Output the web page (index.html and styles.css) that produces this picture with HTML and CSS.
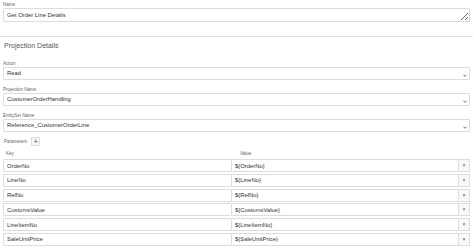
FILE: index.html
```html
<!DOCTYPE html>
<html>
<head>
<meta charset="utf-8">
<link rel="stylesheet" href="styles.css">
</head>
<body>
<div class="page">
  <div class="field name-field">
    <label class="lbl">Name</label>
    <textarea class="ctl area" rows="1">Get Order Line Details</textarea>
  </div>
  <hr class="divider">
  <h2 class="section-title">Projection Details</h2>
  <div class="field">
    <label class="lbl">Action</label>
    <div class="select-wrap"><select class="ctl sel"><option>Read</option></select><span class="chev"><svg viewBox="0 0 10 6" width="4" height="3"><path d="M1 1l4 4 4-4" fill="none" stroke="#444" stroke-width="2"/></svg></span></div>
  </div>
  <div class="field">
    <label class="lbl">Projection Name</label>
    <div class="select-wrap"><select class="ctl sel"><option>CustomerOrderHandling</option></select><span class="chev"><svg viewBox="0 0 10 6" width="4" height="3"><path d="M1 1l4 4 4-4" fill="none" stroke="#444" stroke-width="2"/></svg></span></div>
  </div>
  <div class="field">
    <label class="lbl">EntitySet Name</label>
    <div class="select-wrap"><select class="ctl sel"><option>Reference_CustomerOrderLine</option></select><span class="chev"><svg viewBox="0 0 10 6" width="4" height="3"><path d="M1 1l4 4 4-4" fill="none" stroke="#444" stroke-width="2"/></svg></span></div>
  </div>
  <div class="params-head">
    <span class="lbl">Parameters</span>
    <button class="add">+</button>
  </div>
  <div class="kv-head">
    <span class="lbl key-h">Key</span>
    <span class="lbl val-h">Value</span>
  </div>
  <div class="rows">
    <div class="row"><input class="ctl cell" value="OrderNo"><input class="ctl cell" value="${OrderNo}"><button class="del">×</button></div>
    <div class="row"><input class="ctl cell" value="LineNo"><input class="ctl cell" value="${LineNo}"><button class="del">×</button></div>
    <div class="row"><input class="ctl cell" value="RelNo"><input class="ctl cell" value="${RelNo}"><button class="del">×</button></div>
    <div class="row"><input class="ctl cell" value="CustomsValue"><input class="ctl cell" value="${CustomsValue}"><button class="del">×</button></div>
    <div class="row"><input class="ctl cell" value="LineItemNo"><input class="ctl cell" value="${LineItemNo}"><button class="del">×</button></div>
    <div class="row"><input class="ctl cell" value="SaleUnitPrice"><input class="ctl cell" value="${SaleUnitPrice}"><button class="del">×</button></div>
  </div>
</div>
</body>
</html>
```
FILE: styles.css
```css
* { box-sizing: border-box; }
html, body { margin: 0; padding: 0; background: #fff; }
body { font-family: "Liberation Sans", Arial, sans-serif; color: #333; }
.page { padding: 2px 4px 0 3px; width: 474px; }
.field { display: flex; flex-direction: column; }
.lbl { font-size: 4.5px; color: #666; line-height: 5px; height: 5px; display: block; }
.ctl {
  font-family: "Liberation Sans", Arial, sans-serif;
  font-size: 5.9px;
  color: #333;
  border: 1px solid #dcdcdc;
  background: #fff;
  border-radius: 1px;
  margin: 0;
  outline: none;
}
.area {
  display: block;
  height: 14px;
  margin-top: 1px;
  padding: 3px 3px;
  line-height: 7px;
  resize: vertical;
  overflow: hidden;
  width: 467px;
}
.divider { border: 0; border-top: 1px solid #e2e2e2; margin: 14px -3px 0 -3px; }
.section-title { font-size: 7px; font-weight: 500; color: #555; margin: 4px 0 0 1px; line-height: 10px; height: 10px; }
.section-title + .field { margin-top: 10px; }
.field + .field { margin-top: 7px; }
.select-wrap { position: relative; width: 467px; margin-top: 1px; line-height: 0; }
.sel {
  display: block;
  -webkit-appearance: none; appearance: none;
  width: 100%; height: 13px; padding: 0 3px; line-height: 11px;
}
.chev { position: absolute; right: 3px; top: 5px; line-height: 0; }
.params-head { display: flex; align-items: center; gap: 4px; margin-top: 4px; height: 10px; }
.params-head .lbl { margin-left: 1px; }
.add {
  width: 9px; height: 9px; padding: 0; margin: 0;
  border: 1px solid #dcdcdc; background: #f6f6f6; border-radius: 1px;
  font-size: 7px; line-height: 7px; color: #444; font-family: "Liberation Sans", Arial, sans-serif;
}
.kv-head { display: flex; margin-top: 4px; height: 6px; align-items: center; }
.key-h { width: 232px; padding-left: 3px; }
.val-h { padding-left: 5px; }
.rows { display: flex; flex-direction: column; gap: 1.8px; margin-top: 3px; }
.row { display: flex; height: 13px; width: 467px; }
.cell { height: 13px; padding: 0 3px; line-height: 11px; }
.cell:first-child { width: 229px; }
.cell:nth-child(2) { width: 227px; border-left: 0; }
.del {
  width: 11px; height: 13px; margin: 0; padding: 0;
  border: 1px solid #dcdcdc; border-left: 0; background: #f9f9f9;
  font-size: 5px; line-height: 11px; color: #444; font-family: "Liberation Sans", Arial, sans-serif;
}
```
